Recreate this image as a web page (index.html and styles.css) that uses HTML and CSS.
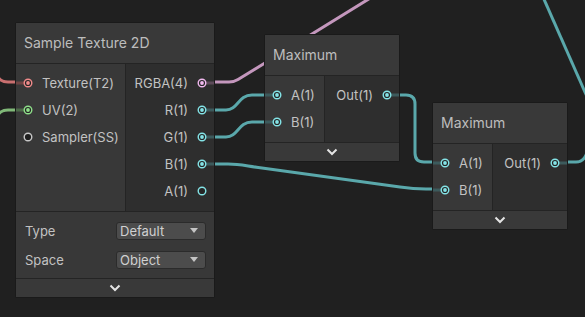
FILE: index.html
```html
<!DOCTYPE html>
<html lang="en">
<head>
    <meta charset="UTF-8">
    <meta name="viewport" content="width=device-width, initial-scale=1.0">
    <title>Shader Graph</title>
    <link rel="stylesheet" href="styles.css">
</head>
<body>
    <div class="graph">
        <!-- edges sit under the nodes -->
        <svg class="edges" width="585" height="317" viewBox="0 0 585 317">
            <path class="edge edge-tex" d="M-2 77 Q1 82 8 82 H20"/>
            <path class="edge edge-uv" d="M-2 115 Q1 110 8 110 H20"/>
            <path class="edge edge-rgba" d="M205 82 H229 Q234 82 238 79.5 L372 -3"/>
            <path class="edge edge-vec" d="M205 110 H226 C238 110 238 95 252 95 H270"/>
            <path class="edge edge-vec" d="M205 137 H226 C238 137 238 122 252 122 H270"/>
            <path class="edge edge-vec" d="M205 164 H228 C240 164 246 166 262 168 L400 187 C410 188.5 416 189 426 189 H440"/>
            <path class="edge edge-vec" d="M390 95 H406 Q415 95 415 104 V153 Q415 162 424 162 H440"/>
            <path class="edge edge-vec" d="M558 162 H576 Q583 162 586 155 L592 140"/>
            <path class="edge edge-vec" d="M543 -3 L592 108"/>
        </svg>

        <div class="node node-sample">
            <div class="node-title">Sample Texture 2D</div>
            <div class="node-body">
                <div class="inputs">
                    <div class="port">
                        <svg class="port-icon" width="16" height="10"><line class="stub stub-tex" x1="0" y1="5" x2="8" y2="5"/><circle class="ring ring-tex" cx="12" cy="5" r="3.8"/><circle class="dot dot-tex" cx="12" cy="5" r="1.9"/></svg>
                        <span>Texture(T2)</span>
                    </div>
                    <div class="port">
                        <svg class="port-icon" width="16" height="10"><line class="stub stub-uv" x1="0" y1="5" x2="8" y2="5"/><circle class="ring ring-uv" cx="12" cy="5" r="3.8"/><circle class="dot dot-uv" cx="12" cy="5" r="1.9"/></svg>
                        <span>UV(2)</span>
                    </div>
                    <div class="port">
                        <svg class="port-icon" width="16" height="10"><circle class="ring ring-ss" cx="12" cy="5" r="3.8"/></svg>
                        <span>Sampler(SS)</span>
                    </div>
                </div>
                <div class="outputs">
                    <div class="port port-out">
                        <span>RGBA(4)</span>
                        <svg class="port-icon" width="16" height="10"><line class="stub stub-rgba" x1="8" y1="5" x2="16" y2="5"/><circle class="ring ring-rgba" cx="4" cy="5" r="3.8"/><circle class="dot dot-rgba" cx="4" cy="5" r="1.9"/></svg>
                    </div>
                    <div class="port port-out">
                        <span>R(1)</span>
                        <svg class="port-icon" width="16" height="10"><line class="stub stub-vec" x1="8" y1="5" x2="16" y2="5"/><circle class="ring ring-vec" cx="4" cy="5" r="3.8"/><circle class="dot dot-vec" cx="4" cy="5" r="1.9"/></svg>
                    </div>
                    <div class="port port-out">
                        <span>G(1)</span>
                        <svg class="port-icon" width="16" height="10"><line class="stub stub-vec" x1="8" y1="5" x2="16" y2="5"/><circle class="ring ring-vec" cx="4" cy="5" r="3.8"/><circle class="dot dot-vec" cx="4" cy="5" r="1.9"/></svg>
                    </div>
                    <div class="port port-out">
                        <span>B(1)</span>
                        <svg class="port-icon" width="16" height="10"><line class="stub stub-vec" x1="8" y1="5" x2="16" y2="5"/><circle class="ring ring-vec" cx="4" cy="5" r="3.8"/><circle class="dot dot-vec" cx="4" cy="5" r="1.9"/></svg>
                    </div>
                    <div class="port port-out">
                        <span>A(1)</span>
                        <svg class="port-icon" width="16" height="10"><circle class="ring ring-vec" cx="4" cy="5" r="3.8"/></svg>
                    </div>
                </div>
            </div>
            <div class="node-settings">
                <div class="setting">
                    <span>Type</span>
                    <div class="dropdown"><span>Default</span><i class="caret"></i></div>
                </div>
                <div class="setting">
                    <span>Space</span>
                    <div class="dropdown"><span>Object</span><i class="caret"></i></div>
                </div>
            </div>
            <div class="node-expand">
                <svg width="12" height="8"><polyline points="1.5,1.5 6,6 10.5,1.5"/></svg>
            </div>
        </div>

        <div class="node node-max node-max-a">
            <div class="node-title">Maximum</div>
            <div class="node-body">
                <div class="inputs">
                    <div class="port">
                        <svg class="port-icon" width="16" height="10"><line class="stub stub-vec" x1="0" y1="5" x2="8" y2="5"/><circle class="ring ring-vec" cx="12" cy="5" r="3.8"/><circle class="dot dot-vec" cx="12" cy="5" r="1.9"/></svg>
                        <span>A(1)</span>
                    </div>
                    <div class="port">
                        <svg class="port-icon" width="16" height="10"><line class="stub stub-vec" x1="0" y1="5" x2="8" y2="5"/><circle class="ring ring-vec" cx="12" cy="5" r="3.8"/><circle class="dot dot-vec" cx="12" cy="5" r="1.9"/></svg>
                        <span>B(1)</span>
                    </div>
                </div>
                <div class="outputs">
                    <div class="port port-out">
                        <span>Out(1)</span>
                        <svg class="port-icon" width="16" height="10"><line class="stub stub-vec" x1="8" y1="5" x2="16" y2="5"/><circle class="ring ring-vec" cx="4" cy="5" r="3.8"/><circle class="dot dot-vec" cx="4" cy="5" r="1.9"/></svg>
                    </div>
                </div>
            </div>
            <div class="node-expand">
                <svg width="12" height="8"><polyline points="1.5,1.5 6,6 10.5,1.5"/></svg>
            </div>
        </div>

        <div class="node node-max node-max-b">
            <div class="node-title">Maximum</div>
            <div class="node-body">
                <div class="inputs">
                    <div class="port">
                        <svg class="port-icon" width="16" height="10"><line class="stub stub-vec" x1="0" y1="5" x2="8" y2="5"/><circle class="ring ring-vec" cx="12" cy="5" r="3.8"/><circle class="dot dot-vec" cx="12" cy="5" r="1.9"/></svg>
                        <span>A(1)</span>
                    </div>
                    <div class="port">
                        <svg class="port-icon" width="16" height="10"><line class="stub stub-vec" x1="0" y1="5" x2="8" y2="5"/><circle class="ring ring-vec" cx="12" cy="5" r="3.8"/><circle class="dot dot-vec" cx="12" cy="5" r="1.9"/></svg>
                        <span>B(1)</span>
                    </div>
                </div>
                <div class="outputs">
                    <div class="port port-out">
                        <span>Out(1)</span>
                        <svg class="port-icon" width="16" height="10"><line class="stub stub-vec" x1="8" y1="5" x2="16" y2="5"/><circle class="ring ring-vec" cx="4" cy="5" r="3.8"/><circle class="dot dot-vec" cx="4" cy="5" r="1.9"/></svg>
                    </div>
                </div>
            </div>
            <div class="node-expand">
                <svg width="12" height="8"><polyline points="1.5,1.5 6,6 10.5,1.5"/></svg>
            </div>
        </div>
    </div>
</body>
</html>
```

FILE: styles.css
```css
* {
    box-sizing: border-box;
    margin: 0;
    padding: 0;
}

body {
    background-color: #202020;
    font-family: Inter, 'Noto Sans', sans-serif;
    overflow: hidden;
}

.graph {
    position: relative;
    width: 585px;
    height: 317px;
    background-color: #202020;
    overflow: hidden;
}

.edges {
    position: absolute;
    left: 0;
    top: 0;
}

.edge {
    fill: none;
    stroke-width: 3;
}

.edge-tex { stroke: #c96f6f; }
.edge-uv { stroke: #80b878; }
.edge-rgba { stroke: #c497bd; }
.edge-vec { stroke: #5aa8ab; }

/* nodes */

.node {
    position: absolute;
    border: 1px solid #1a1a1a;
    border-radius: 2px;
    background-color: #2e2e2e;
    color: #c2c2c2;
    font-size: 13px;
}

.node-sample {
    left: 15px;
    top: 22px;
    width: 200px;
}

.node-max {
    width: 136px;
}

.node-max-a {
    left: 264px;
    top: 34px;
}

.node-max-b {
    left: 432px;
    top: 102px;
}

.node-title {
    height: 41px;
    line-height: 40px;
    padding-left: 8px;
    font-size: 14px;
    color: #bdbdbd;
    background-color: rgba(60, 60, 60, 0.84);
    border-bottom: 1px solid #242424;
}

.node-body {
    display: flex;
}

.inputs {
    width: 110px;
    padding: 5px 0 7px;
    background-color: #383838;
    border-right: 1px solid #242424;
}

.node-max .inputs {
    width: 60px;
}

.outputs {
    flex: 1;
    padding: 5px 0 7px;
    background-color: #2e2e2e;
}

.port {
    display: flex;
    align-items: center;
    gap: 10px;
    height: 27px;
    white-space: nowrap;
}

.port-out {
    justify-content: flex-end;
}

.port-icon {
    flex: none;
    overflow: visible;
}

.stub {
    stroke-width: 3;
}

.stub-tex { stroke: #6e4444; }
.stub-uv { stroke: #4c6a48; }
.stub-rgba { stroke: #5c4a59; }
.stub-vec { stroke: #3c5a5c; }

.ring {
    fill: #262626;
    stroke-width: 1.4;
}

.ring-tex { stroke: #f08a8a; }
.ring-uv { stroke: #8fe08a; }
.ring-ss { stroke: #c8c8c8; fill: #1e1e1e; }
.ring-rgba { stroke: #f0b8ee; }
.ring-vec { stroke: #84e4e7; }

.dot-tex { fill: #f08a8a; }
.dot-uv { fill: #8fe08a; }
.dot-rgba { fill: #f0b8ee; }
.dot-vec { fill: #84e4e7; }

/* settings */

.node-settings {
    padding: 4px 8px 4px 9px;
    background-color: #383838;
    border-top: 1px solid #242424;
}

.setting {
    display: flex;
    align-items: center;
    justify-content: space-between;
    height: 29px;
}

.dropdown {
    display: flex;
    align-items: center;
    justify-content: space-between;
    width: 90px;
    height: 18px;
    padding: 0 7px 0 3px;
    background-color: #4c4c4c;
    border: 1px solid #2b2b2b;
    border-radius: 3px;
    color: #d0d0d0;
}

.caret {
    width: 0;
    height: 0;
    border-left: 4.5px solid transparent;
    border-right: 4.5px solid transparent;
    border-top: 5px solid #c4c4c4;
}

.node-expand {
    display: flex;
    align-items: center;
    justify-content: center;
    height: 19px;
    background-color: #393939;
    border-top: 1px solid #242424;
}

.node-expand polyline {
    fill: none;
    stroke: #e4e4e4;
    stroke-width: 2;
}
```
